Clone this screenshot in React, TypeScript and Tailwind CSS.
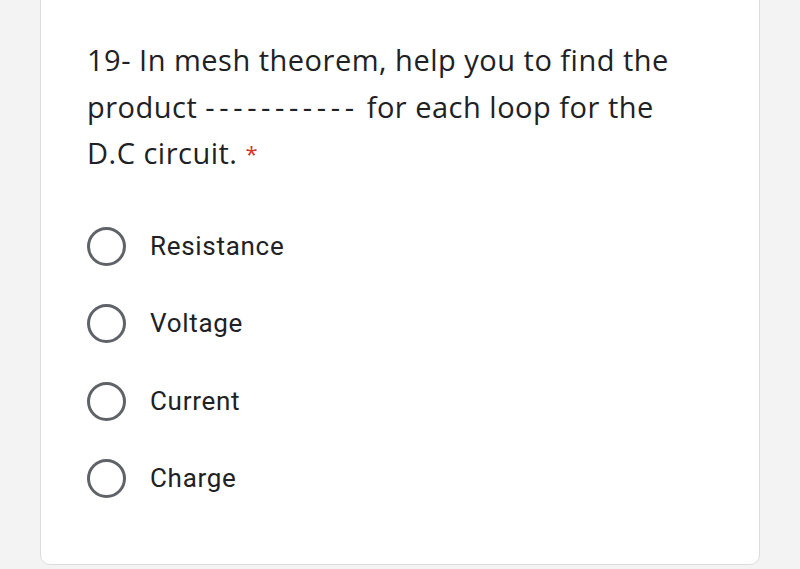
import React from "react";

const options = ["Resistance", "Voltage", "Current", "Charge"];

export default function App() {
  return (
    <div className="w-[800px] h-[569px] bg-[#f3f3f3] overflow-hidden flex justify-center">
      <div className="w-[720px] h-[585px] -mt-[20px] bg-white border border-[#dadce0] rounded-b-[10px] pl-[46px] pt-[56px]">
        <div
          className="text-[29px] leading-[46.5px] text-[#202124] tracking-[0.5px]"
          style={{ fontFamily: "'Open Sans', 'Noto Sans', sans-serif" }}
        >
          <div>19- In mesh theorem, help you to find the</div>
          <div>
            product <span className="tracking-[4.6px]">-----------</span> for each loop for the
          </div>
          <div>
            D.C circuit. <span className="text-[#d93025] text-[22px] align-top">*</span>
          </div>
        </div>
        <div className="mt-[50px] flex flex-col gap-[38.5px]">
          {options.map((o) => (
            <div key={o} className="flex items-center h-[39px]">
              <div className="w-[39px] h-[39px] rounded-full border-[3px] border-[#5f6368] shrink-0" />
              <span
                className="ml-[24px] text-[26px] tracking-[0.7px] text-[#202124]"
                style={{ fontFamily: "Roboto, sans-serif" }}
              >
                {o}
              </span>
            </div>
          ))}
        </div>
      </div>
    </div>
  );
}
